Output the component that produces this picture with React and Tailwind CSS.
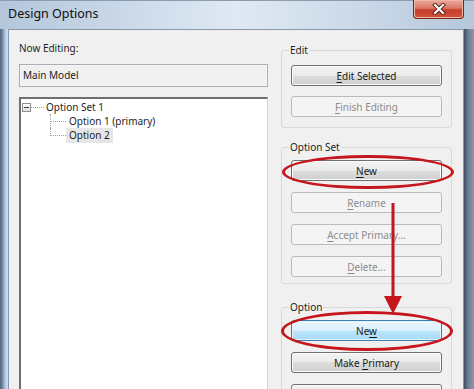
import React from 'react';

const font = { fontFamily: '"Noto Sans", "Open Sans", sans-serif' };

const btnBase =
  'flex h-[21px] w-full items-center justify-center rounded-[3px] border text-[10px] leading-none';

const Button = ({ label = '', ul = '', kind = 'normal' }) => {
  const idx = ul ? label.indexOf(ul) : -1;
  const text =
    idx < 0 ? (
      <span>{label}</span>
    ) : (
      <span>
        {label.slice(0, idx)}
        <span className="underline underline-offset-[2px]">{ul}</span>
        {label.slice(idx + ul.length)}
      </span>
    );
  if (kind === 'disabled') {
    return (
      <div className={`${btnBase} border-[#b7bbbe] bg-[#f4f4f4] text-[#8d8d8d]`}>
        {text}
      </div>
    );
  }
  if (kind === 'blue') {
    return (
      <div
        className={`${btnBase} border-[#3c7fb1] bg-[linear-gradient(to_bottom,#eaf6fd_0%,#d9f0fc_50%,#bee6fd_50%,#a7d9f5_100%)] text-[#1a1a1a] shadow-[inset_0_0_0_1px_#e4f3fb]`}
      >
        {text}
      </div>
    );
  }
  return (
    <div
      className={`${btnBase} border-[#707070] bg-[linear-gradient(to_bottom,#f2f2f2_0%,#ebebeb_50%,#dddddd_50%,#cfcfcf_100%)] text-[#1a1a1a] shadow-[inset_0_0_0_1px_#fbfbfb]`}
    >
      {text}
    </div>
  );
};

const GroupBox = ({ title, className, children }) => (
  <div className={`rounded-[3px] border border-[#d5d9dc] px-[9px] ${className}`}>
    <div className="-mt-[8px] ml-[-2px] w-fit bg-[#f0f0f0] px-[1px] text-[10px] leading-[14px] text-[#1e1e1e]">
      {title}
    </div>
    {children}
  </div>
);

export default function App() {
  return (
    <div
      className="flex h-[389px] w-[474px] flex-col overflow-hidden bg-[#b7c9dc]"
      style={font}
    >
      {/* Title bar */}
      <div className="flex h-[29px] shrink-0 items-start justify-between bg-[linear-gradient(to_right,#b3c6da_0%,#c9d8e8_25%,#dfe9f3_50%,#c7d6e6_80%,#b5c7da_100%)] shadow-[inset_0_1px_0_#8b9cb0]">
        <div className="pl-[8px] pt-[5px] text-[12.5px] leading-[18px] text-[#101010]">
          Design Options
        </div>
        <div className="mr-[10px] flex h-[19px] w-[51px] items-center justify-center rounded-b-[4px] border border-t-0 border-[#7d2418] bg-[linear-gradient(to_bottom,#e9aa9c_0%,#dc7866_45%,#c63f2a_55%,#d0543c_100%)] shadow-[inset_0_0_0_1px_#eeb5a8]">
          <svg width="14" height="12" viewBox="0 0 14 12">
            <path d="M3 2 L11 10 M11 2 L3 10" stroke="#5a1c14" strokeWidth="4" strokeLinecap="square" />
            <path d="M3 2 L11 10 M11 2 L3 10" stroke="#ffffff" strokeWidth="2.2" strokeLinecap="square" />
          </svg>
        </div>
      </div>

      {/* Body */}
      <div className="flex min-h-0 flex-1">
        <div className="w-[8px] shrink-0 bg-[linear-gradient(to_right,#5b6571_0%,#6d85a3_30%,#a8c4e0_60%,#d5e1ec_100%)]" />
        <div className="relative flex w-[456px] shrink-0 border-l border-t border-r border-[#8796aa] bg-[#f0f0f0]">
          {/* Left column */}
          <div className="ml-[10px] flex w-[249px] flex-col pt-[11px]">
            <div className="text-[10px] leading-[14px] text-[#1e1e1e]">Now Editing:</div>
            <div className="mt-[9px] flex h-[23px] items-center border border-[#abadb3] bg-[#f0f0f0] pl-[3px] text-[10px] text-[#1e1e1e] shadow-[inset_0_0_0_1px_#f6f6f6]">
              Main Model
            </div>
            <div className="mt-[10px] flex-1 border-l-2 border-t-2 border-r border-[#6f6f6f] border-r-[#d4d4d4] bg-white pt-[1px] text-[10px] text-[#1e1e1e]">
              <div className="flex h-[14px] items-center">
                <div className="ml-[1px] flex h-[9px] w-[9px] items-center justify-center border border-[#919191] bg-[linear-gradient(to_bottom,#ffffff,#dcdcdc)]">
                  <div className="h-[1px] w-[5px] bg-[#404040]" />
                </div>
                <div className="w-[13px] border-t border-dotted border-[#a0a0a0]" />
                <span className="ml-[2px] leading-[14px]">Option Set 1</span>
              </div>
              <div className="flex h-[14px] items-stretch">
                <div className="w-[29px] shrink-0" />
                <div className="w-[16px] shrink-0 border-l border-dotted border-[#a0a0a0]">
                  <div className="mt-[7px] border-t border-dotted border-[#a0a0a0]" />
                </div>
                <span className="ml-[3px] leading-[14px]">Option 1 (primary)</span>
              </div>
              <div className="flex h-[15px] items-stretch">
                <div className="w-[29px] shrink-0" />
                <div className="flex w-[16px] shrink-0 flex-col">
                  <div className="h-[8px] border-l border-b border-dotted border-[#a0a0a0]" />
                </div>
                <span className="bg-[#e6e6e6] px-[3px] leading-[15px]">Option 2</span>
              </div>
            </div>
          </div>

          {/* Right column */}
          <div className="relative ml-[13px] flex w-[171px] flex-col pt-[20px]">
            <GroupBox title="Edit" className="pb-[10px]">
              <div className="mt-[8px] flex flex-col gap-[10px]">
                <Button label="Edit Selected" ul="E" />
                <Button label="Finish Editing" ul="F" kind="disabled" />
              </div>
            </GroupBox>

            <GroupBox title="Option Set" className="mt-[19px] pb-[6px]">
              <div className="mt-[6px] flex flex-col gap-[11px]">
                <div className="relative">
                  <Button label="New" ul="N" />
                  <div className="absolute -bottom-[8px] -left-[9px] -right-[12px] -top-[5px] rounded-[50%] border-[3px] border-[#c5161d]" />
                </div>
                <Button label="Rename" ul="R" kind="disabled" />
                <Button label="Accept Primary..." ul="A" kind="disabled" />
                <Button label="Delete..." ul="D" kind="disabled" />
              </div>
            </GroupBox>

            <GroupBox title="Option" className="mt-[23px] pb-[6px]">
              <div className="mt-[6px] flex flex-col gap-[11px]">
                <div className="relative">
                  <Button label="New" ul="w" kind="blue" />
                  <div className="absolute -bottom-[10px] -left-[10px] -right-[11px] -top-[9px] rounded-[50%] border-[3px] border-[#c5161d]" />
                </div>
                <Button label="Make Primary" ul="P" />
                <Button />
              </div>
            </GroupBox>

            {/* Red annotation arrow */}
            <svg
              className="absolute left-[102px] top-[173px]"
              width="20"
              height="112"
              viewBox="0 0 20 112"
            >
              <line x1="10" y1="0" x2="10" y2="96" stroke="#c5161d" strokeWidth="3" />
              <polygon points="1,93 19,93 10,111" fill="#c5161d" />
            </svg>
          </div>
        </div>
        <div className="flex-1 bg-[linear-gradient(to_right,#3f4d60_0%,#6c7e94_40%,#8a9aab_100%)]" />
      </div>
    </div>
  );
}
